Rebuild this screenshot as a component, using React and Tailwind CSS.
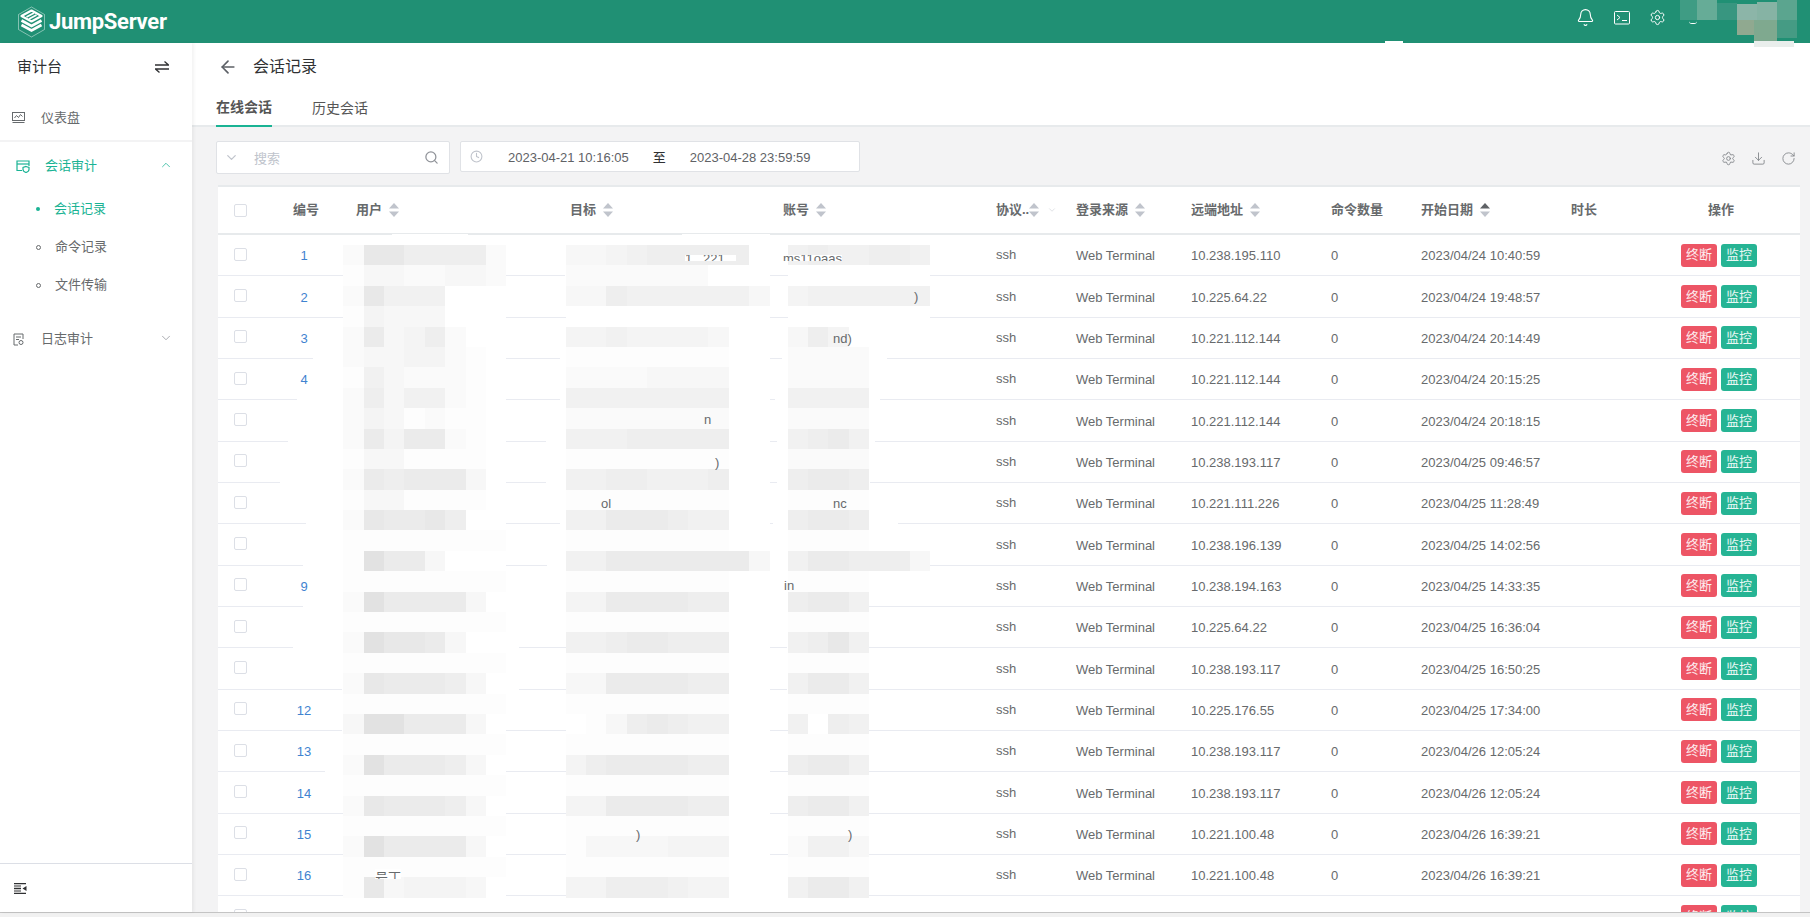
import { ArrowLeft, Bell, ChevronDown, ChevronUp, Clock, Download, RotateCw, Search, Settings } from "lucide-react";

const rows = [
  { no: "1", ip: "10.238.195.110", date: "2023/04/24 10:40:59" },
  { no: "2", ip: "10.225.64.22", date: "2023/04/24 19:48:57" },
  { no: "3", ip: "10.221.112.144", date: "2023/04/24 20:14:49" },
  { no: "4", ip: "10.221.112.144", date: "2023/04/24 20:15:25" },
  { no: "", ip: "10.221.112.144", date: "2023/04/24 20:18:15" },
  { no: "", ip: "10.238.193.117", date: "2023/04/25 09:46:57" },
  { no: "", ip: "10.221.111.226", date: "2023/04/25 11:28:49" },
  { no: "", ip: "10.238.196.139", date: "2023/04/25 14:02:56" },
  { no: "9", ip: "10.238.194.163", date: "2023/04/25 14:33:35" },
  { no: "", ip: "10.225.64.22", date: "2023/04/25 16:36:04" },
  { no: "", ip: "10.238.193.117", date: "2023/04/25 16:50:25" },
  { no: "12", ip: "10.225.176.55", date: "2023/04/25 17:34:00" },
  { no: "13", ip: "10.238.193.117", date: "2023/04/26 12:05:24" },
  { no: "14", ip: "10.238.193.117", date: "2023/04/26 12:05:24" },
  { no: "15", ip: "10.221.100.48", date: "2023/04/26 16:39:21" },
  { no: "16", ip: "10.221.100.48", date: "2023/04/26 16:39:21" },
];

// redacted cells of the screenshot, one string per mosaic row
const shades = ["#ffffff", "#fdfdfd", "#fafafa", "#f7f7f7", "#f4f4f4", "#f1f1f1", "#eeeeee", "#ebebeb", "#e8e8e8", "#e2e2e2"];
const mosaics = [
  {
    left: 343.3,
    rows: [
      "28866662", "13322332", "28555000", "14333000", "27346200", "23344210", "15322210", "26355210",
      "24312110", "27477210", "13311110", "27677730", "13311110", "28778600", "11111111", "19773000",
      "11111111", "29777730", "11111111", "29887300", "11111111", "28777630", "11111111", "39977730",
      "11111111", "29777630", "11111111", "28777630", "11111111", "29777730", "11111111", "18344430",
    ],
  },
  {
    left: 565.7,
    rows: [
      "3345666660", "2222222000", "3365555553", "0000000000", "4454444300", "1111111100", "2222333300", "5555555500",
      "2222222200", "5556666600", "1111111100", "5566555600", "1111111100", "5577765500", "1111111100", "5577777773",
      "1111111100", "4477776600", "1111111100", "5567766600", "1111111100", "3377776600", "1111111100", "0136765500",
      "1111111100", "4677776600", "1111111100", "4477776600", "1111111100", "1333344400", "1111111100", "4466654400",
    ],
  },
  {
    left: 787.7,
    rows: [
      "5655665", "0000000", "4555555", "0000000", "3640", "2222", "2222", "5555",
      "2222", "5675", "2222", "6776", "1111", "6776", "1111", "5776663",
      "1111", "6775", "1111", "5685", "1111", "5775", "1111", "5065",
      "1111", "6775", "1111", "6775", "1111", "2553", "1111", "5775",
    ],
  },
];

// pieces of row divider hidden by the redaction: [row, from, to]
const hidden = [
  [0, 392, 468], [0, 682, 770],
  [1, 349, 503], [1, 565, 731],
  [2, 343, 445],
  [3, 313, 472], [3, 560, 727], [3, 782, 887],
  [4, 297, 480], [4, 560, 733], [4, 775, 880],
  [5, 288, 485], [5, 546, 565], [5, 565, 760], [5, 777, 875],
  [6, 280, 490], [6, 546, 760], [6, 777, 870],
  [7, 306, 497], [7, 560, 742], [7, 773, 898],
  [8, 303, 449], [8, 547, 770], [8, 770, 910],
  [9, 303, 860],
  [10, 293, 519], [10, 616, 727], [10, 787, 853],
  [11, 342, 485], [11, 493, 519], [11, 603, 727], [11, 787, 863],
  [12, 342, 480],
  [13, 325, 487],
  [14, 350, 487],
  [15, 345, 487],
  [16, 345, 490], [16, 727, 853],
];

// bits of text that the redaction left visible
const leftovers = [
  { left: 914, top: 287, text: ")" },
  { left: 833, top: 329, text: "nd)" },
  { left: 704, top: 410, text: "n" },
  { left: 715, top: 453, text: ")" },
  { left: 601, top: 494, text: "ol" },
  { left: 833, top: 494, text: "nc" },
  { left: 784, top: 576, text: "in" },
  { left: 636, top: 825, text: ")" },
  { left: 848, top: 825, text: ")" },
];

// text that shows only below the redaction's edge
const clipped = [
  { left: 685, top: 255, height: 6, shift: "-mt-[6px]", text: "1...221..." },
  { left: 783, top: 255, height: 6, shift: "-mt-[6px]", text: "ms11oaas" },
  { left: 375, top: 869, height: 10, shift: "-mt-[1px]", text: "号丁" },
];

const Mosaic = ({ left, rows }) => (
  <div className="absolute top-[245px] flex flex-col" style={{ left }}>
    {rows.map((row, i) => (
      <div key={i} className="flex h-[20.4px]">
        {row.split("").map((c, j) => (
          <div key={j} className="h-full w-[20.4px]" style={{ backgroundColor: shades[c] }} />
        ))}
      </div>
    ))}
  </div>
);

const SortIcon = ({ active }) => (
  <svg width="10" height="14" viewBox="0 0 10 14" className="shrink-0">
    <path d="M5 0 10 5.5H0Z" fill={active ? "#5f6266" : "#c0c4cc"} />
    <path d="M5 14 0 8.5H10Z" fill="#c0c4cc" />
  </svg>
);

const Checkbox = () => (
  <span className="block h-[13px] w-[13px] rounded-[2px] border border-[#dcdfe6] bg-white" />
);

const Logo = () => (
  <svg width="29" height="32" viewBox="0 0 29 32" fill="none" className="shrink-0">
    <path d="M14.5 1 27.5 8.5V23.5L14.5 31 1.5 23.5V8.5Z" stroke="#ffffff" strokeOpacity=".45" />
    <path d="M14.5 4.5 24.5 10 14.5 15.5 4.5 10Z" stroke="#ffffff" strokeWidth="2.2" strokeLinejoin="round" />
    <path d="M9.5 11 17 7M19.5 9 12 13" stroke="#ffffff" strokeWidth="1.8" />
    <path d="M4.5 14.5 14.5 20 24.5 14.5" stroke="#ffffff" strokeWidth="2.6" />
    <path d="M4.5 19 14.5 24.5 24.5 19" stroke="#ffffff" strokeWidth="2.6" />
  </svg>
);

const TerminalIcon = () => (
  <svg width="16" height="14" viewBox="0 0 16 14" fill="none" stroke="#ffffff" strokeWidth="1">
    <rect x=".5" y=".5" width="15" height="12.5" rx="1" />
    <path d="M3 4 6 6.5 3 9M8 9.5H13" />
  </svg>
);

const DashboardIcon = () => (
  <svg width="14" height="12" viewBox="0 0 14 12" fill="none" stroke="#666a6d" strokeWidth="1">
    <rect x=".5" y=".5" width="12" height="8" />
    <path d="M2.5 6 4.5 3.5 6.5 5.5 8.5 2.5 10.5 4.5M.5 10.5H12.5" />
  </svg>
);

const SessionIcon = () => (
  <svg width="14" height="13" viewBox="0 0 14 13" fill="none" stroke="#1ab394" strokeWidth="1.2">
    <path d="M6 10.5H1V1H13V6" />
    <path d="M1 4H13" />
    <path d="M10 6.5 13 7.5V9.5C13 11 11.5 12 10 12.5 8.5 12 7 11 7 9.5V7.5Z" />
  </svg>
);

const LogIcon = () => (
  <svg width="12" height="13" viewBox="0 0 12 13" fill="none" stroke="#666a6d" strokeWidth="1">
    <path d="M5 12H1V1H10V6" />
    <path d="M3 4H8M3 6.5H6" />
    <circle cx="8" cy="9.5" r="2" />
  </svg>
);

const SwapIcon = () => (
  <svg width="14" height="12" viewBox="0 0 14 12" fill="none" stroke="#303133" strokeWidth="1.3">
    <path d="M0 4H13.5L9.5 .5M14 8H.5L4.5 11.5" />
  </svg>
);

const CollapseIcon = () => (
  <svg width="13" height="11" viewBox="0 0 13 11" fill="#303133">
    <path d="M0 0H12V1.3H0ZM0 4.8H7V6.2H0ZM0 9.7H12V11H0ZM0 2.4H7V3.6H0ZM0 7.4H7V8.6H0ZM12.5 3V8L8.5 5.5Z" />
  </svg>
);

const columns = "grid grid-cols-[58px_71px_214px_212px_213px_80px_115px_140px_90px_150px_81px_158px]";

const headers = [
  { label: "用户", pad: "pl-[9px]" },
  { label: "目标", pad: "pl-[9px]" },
  { label: "账号", pad: "pl-[10px]" },
];

const SubItem = ({ label, active }) => (
  <div className={`flex h-[38px] items-center pl-[36px] ${active ? "text-[#1ab394]" : "text-[#676a6c]"}`}>
    {active ? (
      <span className="h-[4px] w-[4px] rounded-full bg-[#1ab394]" />
    ) : (
      <span className="h-[5px] w-[5px] rounded-full border border-[#676a6c]" />
    )}
    <span className="ml-[14px]">{label}</span>
  </div>
);

const Actions = () => (
  <div className="flex justify-center gap-[4px] pr-[4px]">
    <button className="h-[23px] w-[36px] rounded-[3px] bg-[#ed5565] text-white/90">终断</button>
    <button className="h-[23px] w-[36px] rounded-[3px] bg-[#26b494] text-white/90">监控</button>
  </div>
);

const Row = ({ row }) => (
  <div className={`${columns} h-[41.33px] items-center border-b border-[#e9ebf1] text-[#676a6c]`}>
    <div className="-mt-[2px] pl-[16px]">
      <Checkbox />
    </div>
    <div className="pr-[15px] pt-[2px] text-center text-[#3f83d0]">{row.no}</div>
    <div />
    <div />
    <div />
    <div className="pl-[10px]">ssh</div>
    <div className="pl-[10px] pt-[2px]">Web Terminal</div>
    <div className="pl-[10px] pt-[2px]">{row.ip}</div>
    <div className="pl-[10px] pt-[2px]">0</div>
    <div className="pl-[10px] pt-[2px]">{row.date}</div>
    <div />
    <Actions />
  </div>
);

export default function App() {
  return (
    <div className="relative flex h-[917px] w-full flex-col overflow-hidden bg-[#f3f3f4] text-[13px] [font-family:'Liberation_Sans','Noto_Sans_CJK_SC',sans-serif]">
      <header className="flex h-[43px] shrink-0 items-center bg-[#209074] pl-[17px]">
        <Logo />
        <span className="ml-[3px] text-[22px] font-bold tracking-[-0.3px] text-white [font-family:Roboto,sans-serif]">JumpServer</span>
        <div className="ml-auto flex -translate-y-[4px] items-center gap-[19px] pr-[144px]">
          <Bell size={19} color="#ffffff" strokeWidth={1.4} />
          <TerminalIcon />
          <Settings size={17} color="#ffffff" strokeWidth={1.4} />
        </div>
      </header>

      <div className="flex min-h-0 flex-1">
        <aside className="z-10 flex w-[192px] shrink-0 flex-col bg-white text-[13px] text-[#676a6c] shadow-[2px_0_3px_rgba(0,0,0,0.05)]">
          <div className="flex h-[48px] items-center justify-between pl-[17px] pr-[23px]">
            <span className="text-[15px] text-[#303133]">审计台</span>
            <SwapIcon />
          </div>
          <div className="flex h-[51px] items-center border-b-2 border-[#f3f3f4] pl-[12px] pt-[4px]">
            <DashboardIcon />
            <span className="ml-[15px]">仪表盘</span>
          </div>
          <div className="flex h-[48px] items-center pl-[16px] pr-[19px] text-[#1ab394]">
            <SessionIcon />
            <span className="ml-[15px]">会话审计</span>
            <ChevronUp size={14} strokeWidth={1.3} className="ml-auto -translate-y-[1px]" />
          </div>
          <SubItem label="会话记录" active />
          <SubItem label="命令记录" />
          <SubItem label="文件传输" />
          <div className="mt-[11px] flex h-[48px] items-center pl-[13px] pr-[19px]">
            <LogIcon />
            <span className="ml-[16px]">日志审计</span>
            <ChevronDown size={14} strokeWidth={1.3} className="ml-auto -translate-y-[1px] text-[#909399]" />
          </div>
          <div className="mt-auto flex h-[49px] items-center border-t border-[#dcdfe6] pl-[14px]">
            <CollapseIcon />
          </div>
        </aside>

        <main className="flex min-w-0 flex-1 flex-col overflow-hidden">
          <div className="shrink-0 border-b-2 border-[#e7eaec] bg-white">
            <div className="flex h-[48px] items-center pl-[26px]">
              <ArrowLeft size={20} color="#5c6066" strokeWidth={2} />
              <span className="ml-[15px] text-[16px] text-[#303133]">会话记录</span>
            </div>
            <div className="flex h-[34px] gap-[40px] pl-[24px] text-[14px]">
              <span className="-mb-[2px] flex h-[36px] items-center border-b-2 border-[#1ab394] pb-[2px] font-bold text-[#555555]">在线会话</span>
              <span className="-mb-[2px] flex h-[36px] items-center pb-[2px] text-[#555555]">历史会话</span>
            </div>
          </div>

          <div className="flex h-[58px] shrink-0 items-start pl-[24px] pr-[14px] pt-[14px]">
            <div className="flex h-[33px] w-[234px] items-center rounded-[2px] border border-[#e0e2e6] bg-white pl-[7px] pr-[10px] text-[#c0c4cc]">
              <ChevronDown size={15} />
              <span className="ml-[15px] pt-[2px] text-[13px]">搜索</span>
              <Search size={15} color="#909399" className="ml-auto" />
            </div>
            <div className="ml-[10px] flex h-[31px] w-[400px] items-center rounded-[2px] border border-[#e0e2e6] bg-white pl-[9px] text-[#606266]">
              <Clock size={13} color="#c0c4cc" />
              <span className="ml-[25px] pt-[2px]">2023-04-21 10:16:05</span>
              <span className="ml-[24px] pt-[2px] text-[#303133]">至</span>
              <span className="ml-[24px] pt-[2px]">2023-04-28 23:59:59</span>
            </div>
            <div className="ml-auto flex items-center gap-[15px] pt-[10px] text-[#808488]">
              <Settings size={15} strokeWidth={1.4} />
              <Download size={15} strokeWidth={1.4} />
              <RotateCw size={15} strokeWidth={1.4} />
            </div>
          </div>

          <div className="ml-[26px] mr-[10px] flex-1 border-t-2 border-[#e7eaec] bg-white">
            <div className={`${columns} h-[48px] items-center border-b-2 border-[#e7eaec] font-bold text-[#676a6c]`}>
              <div className="pl-[16px]">
                <Checkbox />
              </div>
              <div className="pr-[11px] text-center">编号</div>
              {headers.map((h) => (
                <div key={h.label} className={`flex items-center gap-[7px] ${h.pad}`}>
                  {h.label}
                  <SortIcon />
                </div>
              ))}
              <div className="flex items-center pl-[10px]">
                协议..
                <SortIcon />
                <ChevronDown size={10} strokeWidth={1.2} className="ml-[8px] text-[#c0c4cc]" />
              </div>
              <div className="flex items-center gap-[7px] pl-[10px]">
                登录来源
                <SortIcon />
              </div>
              <div className="flex items-center gap-[7px] pl-[10px]">
                远端地址
                <SortIcon />
              </div>
              <div className="pl-[10px]">命令数量</div>
              <div className="flex items-center gap-[7px] pl-[10px]">
                开始日期
                <SortIcon active />
              </div>
              <div className="pl-[10px]">时长</div>
              <div className="text-center">操作</div>
            </div>
            {rows.map((row, i) => (
              <Row key={i} row={row} />
            ))}
            <div className={`${columns} h-[41.33px] items-center`}>
              <div className="-mt-[2px] pl-[16px]">
                <Checkbox />
              </div>
              <div className="col-start-12">
                <Actions />
              </div>
            </div>
          </div>
        </main>
      </div>

      <div className="h-[5px] shrink-0 border-t border-[#c4c4c4] bg-[#f1f1f1]" />

      {/* redaction painted over the table */}
      <div className="pointer-events-none absolute inset-x-0 top-0 h-[912px] overflow-hidden">
        {hidden.map(([row, from, to], i) => (
          <div
            key={i}
            className="absolute h-[3px] bg-white"
            style={{ left: from, width: to - from, top: 233.5 + row * 41.33 }}
          />
        ))}
        {mosaics.map((m) => (
          <Mosaic key={m.left} left={m.left} rows={m.rows} />
        ))}
        {leftovers.map((t) => (
          <span key={t.left + t.top} className="absolute text-[#676a6c]" style={{ left: t.left, top: t.top }}>
            {t.text}
          </span>
        ))}
        {clipped.map((t) => (
          <div
            key={t.text}
            className="absolute overflow-hidden bg-white text-[#676a6c]"
            style={{ left: t.left, top: t.top, height: t.height }}
          >
            <div className={t.shift}>{t.text}</div>
          </div>
        ))}
        <div className="absolute left-[1385px] top-[41px] h-[2px] w-[18px] bg-white" />
        <div className="absolute left-[1680px] top-0 h-[20px] w-[17px] bg-[#3f9c84]" />
        <div className="absolute left-[1697px] top-0 h-[20px] w-[20px] bg-[#66ac97]" />
        <div className="absolute left-[1717px] top-[3px] h-[17px] w-[20px] bg-[#389680]" />
        <div className="absolute left-[1737px] top-[4px] h-[16px] w-[20px] bg-[#8cb5a8]" />
        <div className="absolute left-[1757px] top-[2px] h-[18px] w-[20px] bg-[#86b3a4]" />
        <div className="absolute left-[1777px] top-0 h-[20px] w-[20px] bg-[#5ba58f]" />
        <div className="absolute left-[1737px] top-[20px] h-[15px] w-[20px] bg-[#90a990]" />
        <div className="absolute left-[1754px] top-[20px] h-[21px] w-[23px] bg-[#7fa98f]" />
        <div className="absolute left-[1777px] top-[20px] h-[18px] w-[20px] bg-[#459b84]" />
        <div className="absolute left-[1754px] top-[41px] h-[6px] w-[40px] bg-[#e9eeec]" />
        <div className="absolute left-[1689px] top-[21px] h-[3px] w-[8px] rounded-b-full border-b border-white" />
      </div>
    </div>
  );
}
